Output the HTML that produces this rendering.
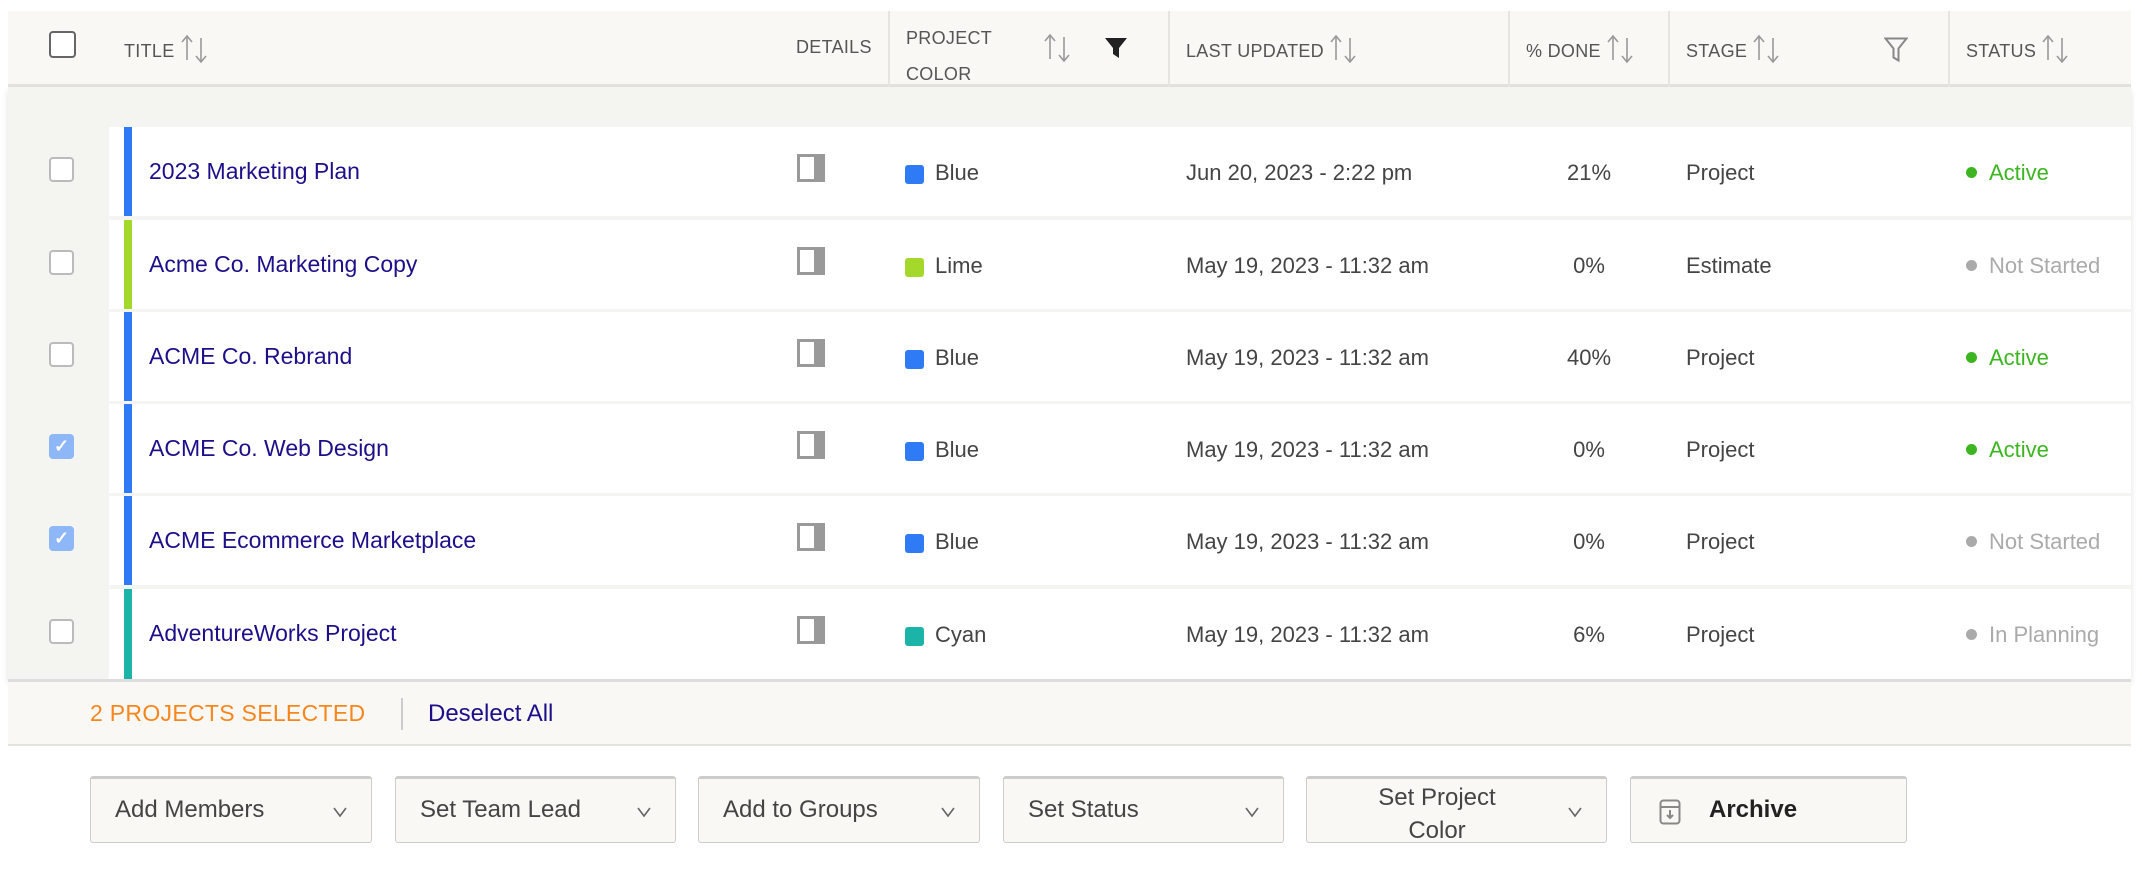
<!DOCTYPE html>
<html><head><meta charset="utf-8"><style>
*{box-sizing:border-box;margin:0;padding:0}
body{width:2142px;height:872px;background:#fff;font-family:"Liberation Sans",sans-serif;position:relative;overflow:hidden;color:#444}
.abs{position:absolute}
.hdr{left:8px;top:11px;width:2123px;height:76px;background:#f9f8f5;border-bottom:3px solid #e3e2dd}
.band{left:8px;top:87px;width:2123px;height:592px;background:#f4f4f1;box-shadow:0 4px 6px rgba(0,0,0,.12)}
.h{font-size:18px;color:#555;letter-spacing:.3px}
.sep{width:2px;background:#e6e5e0;top:11px;height:76px}
.arr{display:inline-block;vertical-align:middle;margin-left:6px;position:relative;top:-3px}
.row{left:109px;width:2022px;height:89px;background:#fff}
.bar{left:124px;width:8px}
.t{font-size:23px;color:#1d0f8a;left:149px}
.c{font-size:22px;color:#444}
.cb{left:49px;width:25px;height:25px;border:2px solid #bbb;border-radius:4px;background:#fff}
.cb.on{background:#8eb7f7;border-color:#8eb7f7;color:#fff;font-size:18px;text-align:center;line-height:21px;font-weight:bold}
.det{left:797px;width:28px;height:28px;border:3px solid #999;border-right:11px solid #999;background:#fff}
.sw{width:19px;height:19px;border-radius:3px;left:905px}
.dot{display:inline-block;width:11px;height:11px;border-radius:50%;margin-right:12px;vertical-align:middle;position:relative;top:-2px}
.sel{left:8px;top:679px;width:2123px;height:67px;background:#f9f8f5;border-bottom:2px solid #e3e2dd;border-top:3px solid #ddd}
.btn{top:776px;height:67px;background:#f9f8f5;border:1px solid #ccc;border-top:3px solid #ccc;border-radius:3px;font-size:24px;color:#444}
.btn span{position:absolute;top:17px;left:24px}
.btn svg.ch{position:absolute;right:24px;top:28px}
</style></head><body>
<svg width="0" height="0" style="position:absolute"><defs>
<g id="ar"><path d="M6 2v24M1 8l5-6 5 6M20 4v24M15 22l5 6 5-6" fill="none" stroke="#999" stroke-width="1.6"/></g>
<g id="chev"><path d="M1 1l6 8 6-8" fill="none" stroke="#666" stroke-width="1.6"/></g>
</defs></svg>
<div class="abs hdr"></div>
<div class="abs band"></div>
<div class="abs cb" style="top:31px;border-color:#666;width:27px;height:27px;background:#fff"></div>
<div class="abs h" style="left:124px;top:37px">TITLE<svg class="arr" width="27" height="30"><use href="#ar"/></svg></div>
<div class="abs h" style="left:796px;top:37px">DETAILS</div>
<div class="abs sep" style="left:888px"></div>
<div class="abs h" style="left:906px;top:20px;line-height:36px">PROJECT<br>COLOR</div>
<svg class="abs" style="left:1044px;top:33px" width="27" height="30"><use href="#ar"/></svg>
<svg class="abs" style="left:1104px;top:37px" width="24" height="22"><path d="M1 1h22l-8 10v10l-6-4v-6z" fill="#222"/></svg>
<div class="abs sep" style="left:1168px"></div>
<div class="abs h" style="left:1186px;top:37px">LAST UPDATED<svg class="arr" width="27" height="30"><use href="#ar"/></svg></div>
<div class="abs sep" style="left:1508px"></div>
<div class="abs h" style="left:1526px;top:37px">% DONE<svg class="arr" width="27" height="30"><use href="#ar"/></svg></div>
<div class="abs sep" style="left:1668px"></div>
<div class="abs h" style="left:1686px;top:37px">STAGE<svg class="arr" width="27" height="30"><use href="#ar"/></svg></div>
<svg class="abs" style="left:1884px;top:37px" width="24" height="26"><path d="M1.5 1.5h21l-8 10v12l-5-3v-9z" fill="none" stroke="#888" stroke-width="2"/></svg>
<div class="abs sep" style="left:1948px"></div>
<div class="abs h" style="left:1966px;top:37px">STATUS<svg class="arr" width="27" height="30"><use href="#ar"/></svg></div>

<div class="abs row" style="top:127px"></div>
<div class="abs row" style="top:220px"></div>
<div class="abs row" style="top:312px"></div>
<div class="abs row" style="top:404px"></div>
<div class="abs row" style="top:496px"></div>
<div class="abs row" style="top:589px;height:90px"></div>

<div class="abs bar" style="top:127px;height:89px;background:#2f7bf5"></div>
<div class="abs bar" style="top:220px;height:89px;background:#a4d82a"></div>
<div class="abs bar" style="top:312px;height:89px;background:#2f7bf5"></div>
<div class="abs bar" style="top:404px;height:89px;background:#2f7bf5"></div>
<div class="abs bar" style="top:496px;height:89px;background:#2f7bf5"></div>
<div class="abs bar" style="top:589px;height:90px;background:#1cb3a8"></div>

<div class="abs cb" style="top:157px"></div>
<div class="abs cb" style="top:250px"></div>
<div class="abs cb" style="top:342px"></div>
<div class="abs cb on" style="top:434px">✓</div>
<div class="abs cb on" style="top:526px">✓</div>
<div class="abs cb" style="top:619px"></div>

<div class="abs t" style="top:158px">2023 Marketing Plan</div>
<div class="abs t" style="top:251px">Acme Co. Marketing Copy</div>
<div class="abs t" style="top:343px">ACME Co. Rebrand</div>
<div class="abs t" style="top:435px">ACME Co. Web Design</div>
<div class="abs t" style="top:527px">ACME Ecommerce Marketplace</div>
<div class="abs t" style="top:620px">AdventureWorks Project</div>

<div class="abs det" style="top:154px"></div>
<div class="abs det" style="top:247px"></div>
<div class="abs det" style="top:339px"></div>
<div class="abs det" style="top:431px"></div>
<div class="abs det" style="top:523px"></div>
<div class="abs det" style="top:616px"></div>

<div class="abs sw" style="top:165px;background:#2f7bf5"></div><div class="abs c" style="left:935px;top:160px">Blue</div>
<div class="abs sw" style="top:258px;background:#a4d82a"></div><div class="abs c" style="left:935px;top:253px">Lime</div>
<div class="abs sw" style="top:350px;background:#2f7bf5"></div><div class="abs c" style="left:935px;top:345px">Blue</div>
<div class="abs sw" style="top:442px;background:#2f7bf5"></div><div class="abs c" style="left:935px;top:437px">Blue</div>
<div class="abs sw" style="top:534px;background:#2f7bf5"></div><div class="abs c" style="left:935px;top:529px">Blue</div>
<div class="abs sw" style="top:627px;background:#1cb3a8"></div><div class="abs c" style="left:935px;top:622px">Cyan</div>

<div class="abs c" style="left:1186px;top:160px">Jun 20, 2023 - 2:22 pm</div>
<div class="abs c" style="left:1186px;top:253px">May 19, 2023 - 11:32 am</div>
<div class="abs c" style="left:1186px;top:345px">May 19, 2023 - 11:32 am</div>
<div class="abs c" style="left:1186px;top:437px">May 19, 2023 - 11:32 am</div>
<div class="abs c" style="left:1186px;top:529px">May 19, 2023 - 11:32 am</div>
<div class="abs c" style="left:1186px;top:622px">May 19, 2023 - 11:32 am</div>

<div class="abs c" style="left:1536px;width:106px;text-align:center;top:160px">21%</div>
<div class="abs c" style="left:1536px;width:106px;text-align:center;top:253px">0%</div>
<div class="abs c" style="left:1536px;width:106px;text-align:center;top:345px">40%</div>
<div class="abs c" style="left:1536px;width:106px;text-align:center;top:437px">0%</div>
<div class="abs c" style="left:1536px;width:106px;text-align:center;top:529px">0%</div>
<div class="abs c" style="left:1536px;width:106px;text-align:center;top:622px">6%</div>

<div class="abs c" style="left:1686px;top:160px">Project</div>
<div class="abs c" style="left:1686px;top:253px">Estimate</div>
<div class="abs c" style="left:1686px;top:345px">Project</div>
<div class="abs c" style="left:1686px;top:437px">Project</div>
<div class="abs c" style="left:1686px;top:529px">Project</div>
<div class="abs c" style="left:1686px;top:622px">Project</div>

<div class="abs c" style="left:1966px;top:160px;color:#3cb521"><span class="dot" style="background:#3cb521"></span>Active</div>
<div class="abs c" style="left:1966px;top:253px;color:#aaa"><span class="dot" style="background:#aaa"></span>Not Started</div>
<div class="abs c" style="left:1966px;top:345px;color:#3cb521"><span class="dot" style="background:#3cb521"></span>Active</div>
<div class="abs c" style="left:1966px;top:437px;color:#3cb521"><span class="dot" style="background:#3cb521"></span>Active</div>
<div class="abs c" style="left:1966px;top:529px;color:#aaa"><span class="dot" style="background:#aaa"></span>Not Started</div>
<div class="abs c" style="left:1966px;top:622px;color:#aaa"><span class="dot" style="background:#aaa"></span>In Planning</div>

<div class="abs sel"></div>
<div class="abs" style="left:90px;top:700px;font-size:23px;color:#f7861c;letter-spacing:.3px">2 PROJECTS SELECTED</div>
<div class="abs" style="left:401px;top:698px;width:2px;height:32px;background:#ccc"></div>
<div class="abs" style="left:428px;top:700px;font-size:24px;color:#1d0f8a">Deselect All</div>

<div class="abs btn" style="left:90px;width:282px"><span>Add Members</span><svg class="ch" width="14" height="11"><use href="#chev"/></svg></div>
<div class="abs btn" style="left:395px;width:281px"><span>Set Team Lead</span><svg class="ch" width="14" height="11"><use href="#chev"/></svg></div>
<div class="abs btn" style="left:698px;width:282px"><span>Add to Groups</span><svg class="ch" width="14" height="11"><use href="#chev"/></svg></div>
<div class="abs btn" style="left:1003px;width:281px"><span>Set Status</span><svg class="ch" width="14" height="11"><use href="#chev"/></svg></div>
<div class="abs btn" style="left:1306px;width:301px"><span style="left:40px;top:2px;text-align:center;line-height:33px;width:180px">Set Project<br>Color</span><svg class="ch" width="14" height="11"><use href="#chev"/></svg></div>
<div class="abs btn" style="left:1630px;width:277px"><svg style="position:absolute;left:28px;top:20px" width="22" height="26"><rect x="1.5" y="1.5" width="19" height="23" rx="3" fill="none" stroke="#888" stroke-width="2"/><line x1="2" y1="8" x2="20" y2="8" stroke="#888" stroke-width="2"/><path d="M11 11v8M8 16l3 3 3-3" fill="none" stroke="#888" stroke-width="2"/></svg><span style="left:78px;font-weight:bold;color:#222">Archive</span></div>
</body></html>
